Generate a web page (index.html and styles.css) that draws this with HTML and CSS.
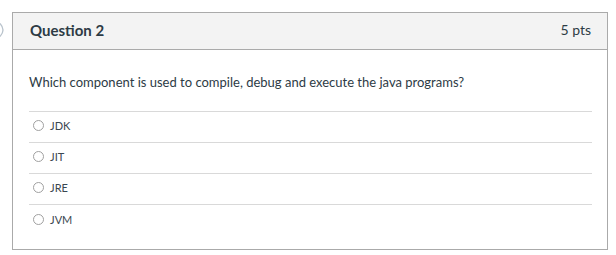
FILE: index.html
```html
<!DOCTYPE html>
<html lang="en">
<head>
  <meta charset="UTF-8">
  <meta name="viewport" content="width=device-width, initial-scale=1.0">
  <title>Question 2</title>
  <link rel="stylesheet" href="styles.css">
</head>
<body>
  <svg class="nav-arrow" width="8" height="16" viewBox="0 0 8 16">
    <path d="M0 1.5 Q6 8 0 14.5" fill="none" stroke="#b9c3cc" stroke-width="1.3"/>
  </svg>
  <div class="question">
    <div class="header">
      <span class="title">Question 2</span>
      <span class="points">5 pts</span>
    </div>
    <div class="content">
      <p class="text">Which component is used to compile, debug and execute the java programs?</p>
      <div class="answers">
        <label class="answer"><span class="radio"></span>JDK</label>
        <label class="answer"><span class="radio"></span>JIT</label>
        <label class="answer"><span class="radio"></span>JRE</label>
        <label class="answer"><span class="radio"></span>JVM</label>
      </div>
    </div>
  </div>
</body>
</html>
```

FILE: styles.css
```css
body {
  margin: 0;
  padding: 12px 8px 0 12px;
  font-family: 'Lato', 'Liberation Sans', sans-serif;
  color: #2d3b45;
  background: #fff;
}

.nav-arrow {
  position: absolute;
  left: 0;
  top: 22px;
}

.question {
  width: 594px;
  height: 236px;
  border: 1px solid #aaaaaa;
}

.header {
  display: flex;
  justify-content: space-between;
  align-items: center;
  box-sizing: border-box;
  height: 37px;
  padding: 0 16px 3px 17px;
  background: #f3f3f3;
  border-bottom: 1px solid #aaaaaa;
}

.title {
  font-size: 15px;
  font-weight: bold;
}

.points {
  font-size: 14px;
  color: #2d3b45;
}

.content {
  padding: 0 15px 0 16px;
}

.text {
  margin: 0;
  padding: 24px 0 21px;
  font-size: 13px;
  line-height: 16px;
}

.answers {
  border-top: 1px solid #d9d9d9;
}

.answer {
  display: flex;
  align-items: center;
  box-sizing: border-box;
  height: 31px;
  padding-bottom: 3px;
  border-bottom: 1px solid #d9d9d9;
  font-size: 11px;
  color: #3a4750;
}

.answer:last-child {
  border-bottom: none;
}

.radio {
  width: 9px;
  height: 9px;
  margin: 0 6px 0 4px;
  border: 1px solid #a0a0a0;
  border-radius: 50%;
}
```
